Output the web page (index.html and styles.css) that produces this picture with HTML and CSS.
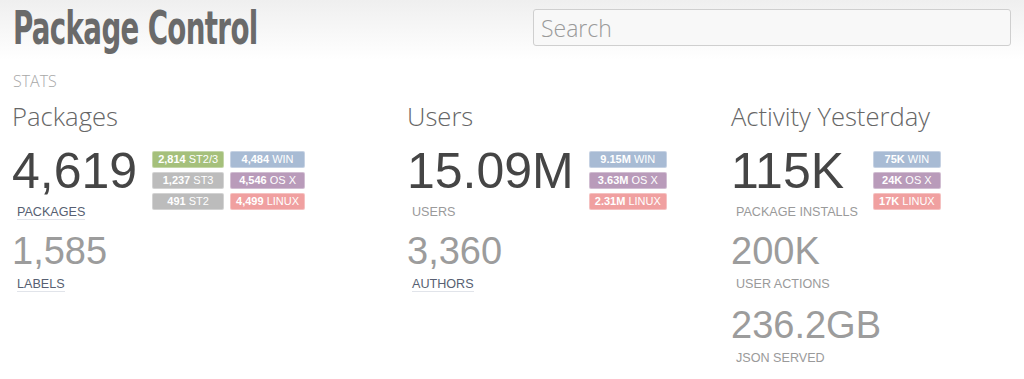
FILE: index.html
```html
<!DOCTYPE html>
<html lang="en">

<head>
  <meta charset="UTF-8">
  <meta name="viewport" content="width=device-width, initial-scale=1.0">
  <title>Package Control</title>
  <link rel="stylesheet" href="styles.css">
</head>

<body>
  <header class="top">
    <h1 class="logo">Package Control</h1>
    <input class="search" type="text" placeholder="Search">
  </header>

  <h2 class="section-title">Stats</h2>

  <div class="stats">
    <!-- packages -->
    <section class="col col-packages">
      <h3>Packages</h3>
      <div class="main-row">
        <div class="stat">
          <div class="num big">4,619</div>
          <a class="label link" href="#">Packages</a>
        </div>
        <div class="badges">
          <span class="badge green"><b>2,814</b> ST2/3</span>
          <span class="badge grey"><b>1,237</b> ST3</span>
          <span class="badge grey"><b>491</b> ST2</span>
          <span class="badge blue"><b>4,484</b> WIN</span>
          <span class="badge purple"><b>4,546</b> OS X</span>
          <span class="badge red"><b>4,499</b> LINUX</span>
        </div>
      </div>
      <div class="stat">
        <div class="num">1,585</div>
        <a class="label link" href="#">Labels</a>
      </div>
    </section>

    <!-- users -->
    <section class="col col-users">
      <h3>Users</h3>
      <div class="main-row">
        <div class="stat">
          <div class="num big">15.09M</div>
          <span class="label">Users</span>
        </div>
        <div class="badges">
          <span class="badge blue"><b>9.15M</b> WIN</span>
          <span class="badge purple"><b>3.63M</b> OS X</span>
          <span class="badge red"><b>2.31M</b> LINUX</span>
        </div>
      </div>
      <div class="stat">
        <div class="num">3,360</div>
        <a class="label link" href="#">Authors</a>
      </div>
    </section>

    <!-- activity -->
    <section class="col col-activity">
      <h3>Activity Yesterday</h3>
      <div class="main-row">
        <div class="stat">
          <div class="num big">115K</div>
          <span class="label">Package Installs</span>
        </div>
        <div class="badges">
          <span class="badge blue"><b>75K</b> WIN</span>
          <span class="badge purple"><b>24K</b> OS X</span>
          <span class="badge red"><b>17K</b> LINUX</span>
        </div>
      </div>
      <div class="stat">
        <div class="num">200K</div>
        <span class="label">User Actions</span>
      </div>
      <div class="stat">
        <div class="num">236.2GB</div>
        <span class="label">JSON Served</span>
      </div>
    </section>
  </div>
</body>

</html>
```

FILE: styles.css
```css
* {
  box-sizing: border-box;
}

body {
  margin: 0;
  padding: 0 12px;
  background: #fff;
  font-family: "Liberation Sans", Arial, sans-serif;
  color: #444;
}

.top {
  display: flex;
  justify-content: space-between;
  align-items: flex-start;
  height: 60px;
  margin: 0 -12px;
  padding: 0 13px;
  background: linear-gradient(#efefef, #fff);
}

.logo {
  margin: 4px 0 0;
  font-family: "Liberation Sans Narrow", "DejaVu Sans Condensed", sans-serif;
  font-weight: bold;
  font-size: 47px;
  line-height: 48px;
  letter-spacing: -1px;
  color: #6a6a6a;
  white-space: nowrap;
  transform: scaleX(0.655);
  transform-origin: left center;
}

.search {
  width: 478px;
  height: 37px;
  margin-top: 9px;
  padding: 0 7px;
  border: 1px solid #cfcfcf;
  border-radius: 3px;
  background: #f8f8f8;
  font-family: "Open Sans", sans-serif;
  font-weight: 300;
  font-size: 23px;
  color: #555;
  outline: none;
}

.search::placeholder {
  color: #9a9a9a;
}

.section-title {
  margin: 11px 0 0 1px;
  font-family: "Open Sans", sans-serif;
  font-weight: 300;
  font-size: 16px;
  line-height: 20px;
  text-transform: uppercase;
  color: #a8a8a8;
}

.stats {
  display: grid;
  grid-template-columns: 395px 324px 1fr;
}

.col h3 {
  margin: 11px 0 0;
  font-family: "Open Sans", sans-serif;
  font-weight: 300;
  font-size: 25.6px;
  line-height: 30px;
  color: #666;
}

.main-row {
  display: flex;
  align-items: flex-start;
  gap: 15px;
  margin-top: 14px;
}

.stat {
  margin-bottom: 14px;
}

.main-row .stat {
  margin-bottom: 12px;
}

.num {
  font-size: 38px;
  line-height: 38px;
  color: #9c9c9c;
  margin-bottom: 4px;
  white-space: nowrap;
}

.num.big {
  font-size: 50px;
  line-height: 50px;
  color: #454545;
  margin-bottom: 6px;
}

.label {
  display: inline-block;
  margin-left: 5px;
  font-size: 12.6px;
  line-height: 14px;
  text-transform: uppercase;
  color: #9a9a9a;
  border-bottom: 1px solid transparent;
  text-decoration: none;
  white-space: nowrap;
}

.label.link {
  color: #575f72;
  border-bottom-color: #e1e4ea;
}

.badges {
  display: grid;
  grid-auto-flow: column;
  grid-template-rows: repeat(3, 17px);
  gap: 4px 6px;
  margin-top: 5px;
}

.badge {
  display: block;
  padding: 0 5px;
  border: 1px solid rgba(255, 255, 255, 0.35);
  border-radius: 2px;
  font-size: 11px;
  line-height: 15px;
  text-align: center;
  color: #fff;
  white-space: nowrap;
}

.badge.green {
  background: #a5c07b;
}

.badge.grey {
  background: #bcbcbc;
}

.badge.blue {
  background: #a8bbd4;
}

.badge.purple {
  background: #b99bba;
}

.badge.red {
  background: #f0a0a0;
}
```
